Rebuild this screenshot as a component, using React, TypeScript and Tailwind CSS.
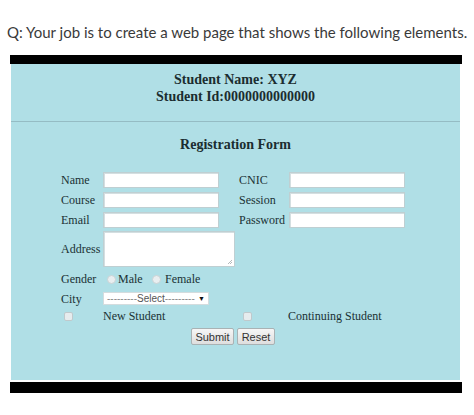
import React from "react";

const Field = ({ w = "w-[116px]" }: { w?: string }) => (
  <div
    className={`${w} h-[16px] bg-white border border-[#bfcfd2] shadow-[inset_1px_1px_0_#d4dfe1]`}
  />
);

const Radio = () => (
  <span className="inline-block w-[9px] h-[9px] rounded-full border border-[#c9d3d5] bg-[#e9eef0]" />
);

const Check = () => (
  <span className="inline-block w-[9px] h-[9px] rounded-[2px] border border-[#bfc9cc] bg-[#e6ecee]" />
);

const Button = ({ label, w }: { label: string; w: string }) => (
  <div
    className={`${w} h-[17px] flex items-center justify-center rounded-[2px] border border-[#a9b2b4] bg-gradient-to-b from-[#f6f6f6] to-[#dedede] font-['Liberation_Sans'] text-[11px] text-[#333]`}
  >
    {label}
  </div>
);

export default function App() {
  return (
    <div className="w-[474px] h-[415px] bg-white font-['Liberation_Serif',serif] text-[12px] text-[#1a3134]">
      <p className="pt-[22px] pl-[7px] font-['Lato',sans-serif] text-[15px] leading-[20px] text-[#3a3a3a] whitespace-nowrap">
        Q: Your job is to create a web page that shows the following elements.
      </p>
      <div className="mt-[13px] ml-[10px] w-[452px]">
        <div className="h-[9px] bg-black" />
        <div className="ml-px w-[449px] bg-[#b0dfe6]">
          <div className="h-[57px] pt-[7px] text-center font-bold text-[14px] leading-[17px] text-[#1b2d30]">
            <div>Student Name: XYZ</div>
            <div>Student Id:0000000000000</div>
          </div>
          <div className="h-px bg-[#95bcc4]" />
          <div className="mt-[14px] h-[17px] text-center font-bold text-[14px] leading-[17px] text-[#1b2d30]">
            Registration Form
          </div>

          <div className="mt-[19px] pl-[50px] pb-[35px] flex flex-col leading-[14px]">
            <div className="flex flex-col gap-[4px]">
              {[
                ["Name", "CNIC"],
                ["Course", "Session"],
                ["Email", "Password"],
              ].map(([a, b]) => (
                <div key={a} className="flex items-center h-[16px]">
                  <span className="w-[42px]">{a}</span>
                  <Field />
                  <span className="ml-[20px] w-[50px]">{b}</span>
                  <Field />
                </div>
              ))}
            </div>

            <div className="mt-[3px] flex items-center h-[36px]">
              <span className="w-[42px]">Address</span>
              <div className="relative w-[132px] h-[36px] bg-white border border-[#bfcfd2] shadow-[inset_1px_1px_0_#d4dfe1]">
                <svg className="absolute right-[1px] bottom-[1px]" width="6" height="6" viewBox="0 0 6 6">
                  <path d="M5 1 L1 5 M5 3 L3 5" stroke="#a0a8aa" strokeWidth="0.8" />
                </svg>
              </div>
            </div>

            <div className="mt-[5px] flex items-center h-[14px]">
              <span className="w-[46px]">Gender</span>
              <Radio />
              <span className="ml-[2px] w-[34px]">Male</span>
              <Radio />
              <span className="ml-[4px]">Female</span>
            </div>

            <div className="mt-[6px] flex items-center h-[13px]">
              <span className="w-[42px]">City</span>
              <div className="w-[106px] h-[13px] bg-white border border-[#d4dcde] flex items-center pl-[3px] pr-[3px] font-['Liberation_Sans'] text-[10px] leading-[11px] text-[#555]">
                <span className="text-[#888]">---------</span>
                <span>Select</span>
                <span className="text-[#888]">---------</span>
                <span className="ml-auto text-[7px] text-[#111]">▼</span>
              </div>
            </div>

            <div className="mt-[4px] flex items-center h-[14px]">
              <span className="w-[42px] pl-[3px] flex items-center">
                <Check />
              </span>
              <span className="w-[140px]">New Student</span>
              <span className="w-[45px] flex items-center">
                <Check />
              </span>
              <span>Continuing Student</span>
            </div>

            <div className="mt-[5px] flex gap-[3px] ml-[130px]">
              <Button label="Submit" w="w-[43px]" />
              <Button label="Reset" w="w-[38px]" />
            </div>
          </div>
        </div>
        <div className="h-[2px] bg-white" />
        <div className="h-[11px] bg-black" />
      </div>
    </div>
  );
}
